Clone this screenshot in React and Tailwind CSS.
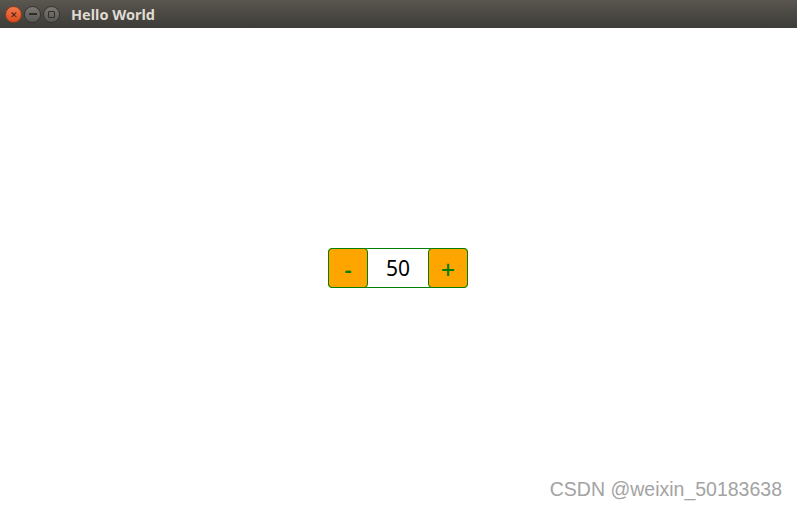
export default function App() {
  return (
    <div className="w-[797px] h-[508px] flex flex-col bg-white overflow-hidden" style={{ fontFamily: '"Noto Sans", "Open Sans", sans-serif' }}>
      <div className="h-[28px] shrink-0 flex items-center bg-gradient-to-b from-[#5a5650] to-[#3d3c38] pl-[5px]">
        <div className="w-[17px] h-[17px] rounded-full bg-gradient-to-b from-[#f37a4a] to-[#dc4a1c] border border-[#8a3a1a] flex items-center justify-center text-[#3b1c10] text-[9px] leading-none">✕</div>
        <div className="w-[17px] h-[17px] ml-[2px] rounded-full bg-gradient-to-b from-[#7b7873] to-[#5a5854] border border-[#33322f] flex items-center justify-center">
          <div className="w-[8px] h-[1.5px] bg-[#2e2d2a]" />
        </div>
        <div className="w-[17px] h-[17px] ml-[2px] rounded-full bg-gradient-to-b from-[#7b7873] to-[#5a5854] border border-[#33322f] flex items-center justify-center">
          <div className="w-[7px] h-[7px] border border-[#2e2d2a] rounded-[1px]" />
        </div>
        <span className="ml-[11px] text-[14.5px] font-bold text-[#dfdbd2] leading-none">Hello World</span>
      </div>
      <div className="flex-1 relative flex items-start justify-center">
        <div className="mt-[220px] -ml-[1px] flex h-[40px] w-[140px] border border-[#008000] rounded-[4px]">
          <div className="w-[40px] -m-[1px] h-[40px] bg-[#ffa500] border border-[#008000] rounded-[4px] flex items-center justify-center text-[#008000] text-[22px] font-semibold leading-none pt-[1px]">-</div>
          <div className="flex-1 flex items-center justify-center text-[21px] text-black leading-none">50</div>
          <div className="w-[40px] -m-[1px] h-[40px] bg-[#ffa500] border border-[#008000] rounded-[4px] flex items-center justify-center text-[#008000] text-[25px] font-medium leading-none pt-[2px]">+</div>
        </div>
        <div className="absolute right-[15px] bottom-[9px] text-[19.5px] text-[#a3a3a3] leading-none" style={{ fontFamily: '"Liberation Sans", Arial, sans-serif', textShadow: '0 0 1px #fff' }}>CSDN @weixin_50183638</div>
      </div>
    </div>
  );
}
